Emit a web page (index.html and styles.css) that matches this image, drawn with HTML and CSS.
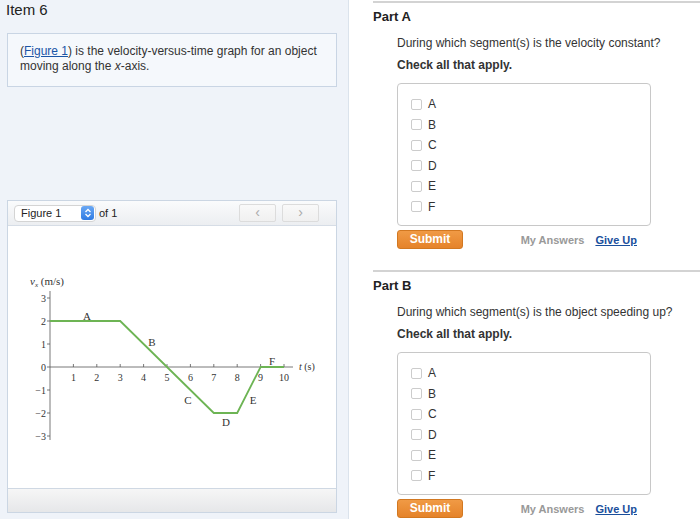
FILE: index.html
```html
<!DOCTYPE html>
<html>
<head>
<meta charset="utf-8">
<link rel="stylesheet" href="styles.css">
</head>
<body>
<div class="page">
  <div class="left">
    <h1 class="item-title">Item 6</h1>
    <div class="intro">(<a class="link" href="#">Figure 1</a>) is the velocity-versus-time graph for an object moving along the <i>x</i>-axis.</div>
    <div class="figure">
      <div class="fig-toolbar">
        <div class="fig-select"><span class="fig-select-label">Figure 1</span><span class="stepper"><svg width="8" height="10" viewBox="0 0 8 10"><path d="M1.5 4 L4 1.5 L6.5 4 M1.5 6 L4 8.5 L6.5 6" fill="none" stroke="#fff" stroke-width="1.3"/></svg></span></div>
        <span class="of">of 1</span>
        <div class="nav">
          <span class="nav-btn">&lsaquo;</span>
          <span class="nav-btn">&rsaquo;</span>
        </div>
      </div>
      <div class="fig-content">
        <svg class="chart" width="328" height="262" viewBox="0 0 328 262">
          <g stroke="#555" stroke-width="0.8" fill="none">
            <line x1="42" y1="65" x2="42" y2="214"/>
            <line x1="42" y1="141" x2="285" y2="141"/>
            <line x1="39" y1="72" x2="42" y2="72"/>
            <line x1="39" y1="95" x2="42" y2="95"/>
            <line x1="39" y1="118" x2="42" y2="118"/>
            <line x1="39" y1="141" x2="42" y2="141"/>
            <line x1="39" y1="164" x2="42" y2="164"/>
            <line x1="39" y1="187" x2="42" y2="187"/>
            <line x1="39" y1="210" x2="42" y2="210"/>
            <line x1="65.4" y1="138" x2="65.4" y2="141"/>
            <line x1="88.8" y1="138" x2="88.8" y2="141"/>
            <line x1="112.2" y1="138" x2="112.2" y2="141"/>
            <line x1="135.6" y1="138" x2="135.6" y2="141"/>
            <line x1="159" y1="138" x2="159" y2="141"/>
            <line x1="182.4" y1="138" x2="182.4" y2="141"/>
            <line x1="205.8" y1="138" x2="205.8" y2="141"/>
            <line x1="229.2" y1="138" x2="229.2" y2="141"/>
            <line x1="252.6" y1="138" x2="252.6" y2="141"/>
            <line x1="276" y1="138" x2="276" y2="141"/>
          </g>
          <polyline points="42,95 112.2,95 205.8,187 229.2,187 252.6,141 276,141" fill="none" stroke="#6db454" stroke-width="1.8"/>
          <g class="ax" text-anchor="end">
            <text x="38" y="75.5">3</text>
            <text x="38" y="98.5">2</text>
            <text x="38" y="121.5">1</text>
            <text x="38" y="144.5">0</text>
            <text x="38" y="167.5">−1</text>
            <text x="38" y="190.5">−2</text>
            <text x="38" y="213.5">−3</text>
          </g>
          <g class="ax" text-anchor="middle">
            <text x="65.4" y="155">1</text>
            <text x="88.8" y="155">2</text>
            <text x="112.2" y="155">3</text>
            <text x="135.6" y="155">4</text>
            <text x="159" y="155">5</text>
            <text x="182.4" y="155">6</text>
            <text x="205.8" y="155">7</text>
            <text x="229.2" y="155">8</text>
            <text x="252.6" y="155">9</text>
            <text x="276" y="155">10</text>
          </g>
          <g class="seg" text-anchor="middle">
            <text x="79" y="94">A</text>
            <text x="144" y="120">B</text>
            <text x="180" y="178">C</text>
            <text x="218" y="200">D</text>
            <text x="245" y="178">E</text>
            <text x="264" y="139">F</text>
          </g>
          <text class="ax ylab" x="22" y="59"><tspan font-style="italic">v</tspan><tspan font-style="italic" font-size="7" dy="2">x</tspan><tspan dy="-2"> (m/s)</tspan></text>
          <text class="ax" x="291" y="144"><tspan font-style="italic">t</tspan> (s)</text>
        </svg>
      </div>
      <div class="fig-footer"></div>
    </div>
  </div>
  <div class="right">
    <section class="part">
      <h2 class="part-title">Part A</h2>
      <div class="part-body">
        <p class="question">During which segment(s) is the velocity constant?</p>
        <p class="instr">Check all that apply.</p>
        <div class="choices">
          <div class="choice"><span class="cb"></span>A</div>
          <div class="choice"><span class="cb"></span>B</div>
          <div class="choice"><span class="cb"></span>C</div>
          <div class="choice"><span class="cb"></span>D</div>
          <div class="choice"><span class="cb"></span>E</div>
          <div class="choice"><span class="cb"></span>F</div>
        </div>
        <div class="actions">
          <span class="submit">Submit</span>
          <span class="my-answers">My Answers</span>
          <a class="give-up" href="#">Give Up</a>
        </div>
      </div>
    </section>
    <section class="part part-b">
      <h2 class="part-title">Part B</h2>
      <div class="part-body">
        <p class="question">During which segment(s) is the object speeding up?</p>
        <p class="instr">Check all that apply.</p>
        <div class="choices">
          <div class="choice"><span class="cb"></span>A</div>
          <div class="choice"><span class="cb"></span>B</div>
          <div class="choice"><span class="cb"></span>C</div>
          <div class="choice"><span class="cb"></span>D</div>
          <div class="choice"><span class="cb"></span>E</div>
          <div class="choice"><span class="cb"></span>F</div>
        </div>
        <div class="actions">
          <span class="submit">Submit</span>
          <span class="my-answers">My Answers</span>
          <a class="give-up" href="#">Give Up</a>
        </div>
      </div>
    </section>
  </div>
</div>
</body>
</html>
```

FILE: styles.css
```css
* { box-sizing: border-box; }
html, body { margin: 0; padding: 0; }
body {
  width: 700px;
  height: 519px;
  overflow: hidden;
  background: #fff;
  font-family: "Liberation Sans", Arial, sans-serif;
  color: #333;
}
.page {
  display: flex;
  height: 519px;
}
.left {
  width: 349px;
  flex: none;
  background: #eff3f9;
  border-right: 1px solid #dbe3ec;
  padding: 0 11px 0 7px;
}
.item-title {
  margin: 0 0 13px -1px;
  font-size: 15px;
  font-weight: normal;
  line-height: 20px;
  color: #222;
}
.intro {
  height: 54px;
  border: 1px solid #c9d5e4;
  background: #f5f8fc;
  padding: 10px 12px 0;
  font-size: 12px;
  line-height: 15px;
  color: #333;
}
.link { color: #1a55a6; text-decoration: underline; }
.figure {
  margin-top: 113px;
  height: 313px;
  border: 1px solid #cbd6e3;
  background: #fff;
  display: flex;
  flex-direction: column;
}
.fig-toolbar {
  height: 25px;
  flex: none;
  display: flex;
  align-items: center;
  padding: 0 17px 0 6px;
  background: linear-gradient(#fafbfc, #eceef1);
  border-bottom: 1px solid #d6dde6;
}
.fig-select {
  width: 82px;
  height: 17px;
  display: flex;
  align-items: center;
  justify-content: space-between;
  background: #fff;
  border: 1px solid #d4d4d4;
  border-radius: 4px;
  padding: 0 1px 0 6px;
  font-size: 11px;
  color: #222;
}
.stepper {
  width: 13px;
  height: 14px;
  border-radius: 3px;
  background: linear-gradient(#6aa8f4, #2f7be3);
  display: flex;
  align-items: center;
  justify-content: center;
}
.of {
  margin-left: 3px;
  font-size: 11px;
  color: #222;
}
.nav {
  margin-left: auto;
  display: flex;
  gap: 6px;
}
.nav-btn {
  width: 37px;
  height: 18px;
  border: 1px solid #dcdcdc;
  border-radius: 2px;
  background: linear-gradient(#f9f9f9, #f0f0f0);
  color: #aaa;
  font-size: 14px;
  line-height: 15px;
  text-align: center;
}
.fig-content {
  flex: 1;
  background: #fff;
}
.chart { display: block; }
.ax { font-family: "Liberation Serif", "Times New Roman", serif; font-size: 10px; fill: #333; }
.ylab { font-size: 11px; }
.seg { font-family: "Liberation Serif", "Times New Roman", serif; font-size: 11px; fill: #333; }
.fig-footer {
  height: 24px;
  flex: none;
  border-top: 1px solid #cfd8e3;
  background: linear-gradient(#f6f6f6, #e6e7e9);
}
.right {
  flex: 1;
  padding-left: 24px;
}
.part {
  margin-top: 1px;
  border-top: 2px solid #d3d3d3;
  padding-top: 6px;
  height: 269px;
}
.part-b {
  margin-top: 0;
}
.part-title {
  margin: 0;
  font-size: 13px;
  font-weight: bold;
  line-height: 16px;
  color: #222;
}
.part-body {
  padding-left: 24px;
}
.question {
  margin: 10px 0 0;
  font-size: 12px;
  line-height: 16px;
  color: #333;
}
.instr {
  margin: 6px 0 0;
  font-size: 12px;
  font-weight: bold;
  line-height: 16px;
  color: #333;
}
.choices {
  margin-top: 10px;
  width: 254px;
  height: 143px;
  border: 1px solid #c8c8c8;
  border-radius: 4px;
  padding: 10px 0 0 13px;
}
.choice {
  height: 20.5px;
  display: flex;
  align-items: center;
  font-size: 12px;
  color: #333;
}
.cb {
  width: 11px;
  height: 11px;
  border: 1px solid #cccccc;
  border-radius: 2px;
  background: #fff;
  margin-right: 6px;
}
.actions {
  margin-top: 4px;
  width: 254px;
  display: flex;
  align-items: center;
}
.submit {
  width: 66px;
  height: 19px;
  border: 1px solid #d27821;
  border-radius: 3px;
  background: linear-gradient(#f09a45, #e5832a);
  color: #fff;
  font-size: 12px;
  font-weight: bold;
  line-height: 17px;
  text-align: center;
}
.my-answers {
  margin-left: auto;
  font-size: 11px;
  font-weight: bold;
  color: #999;
}
.give-up {
  margin: 0 14px 0 11px;
  font-size: 11px;
  font-weight: bold;
  color: #1a4f9c;
  text-decoration: underline;
}
```
